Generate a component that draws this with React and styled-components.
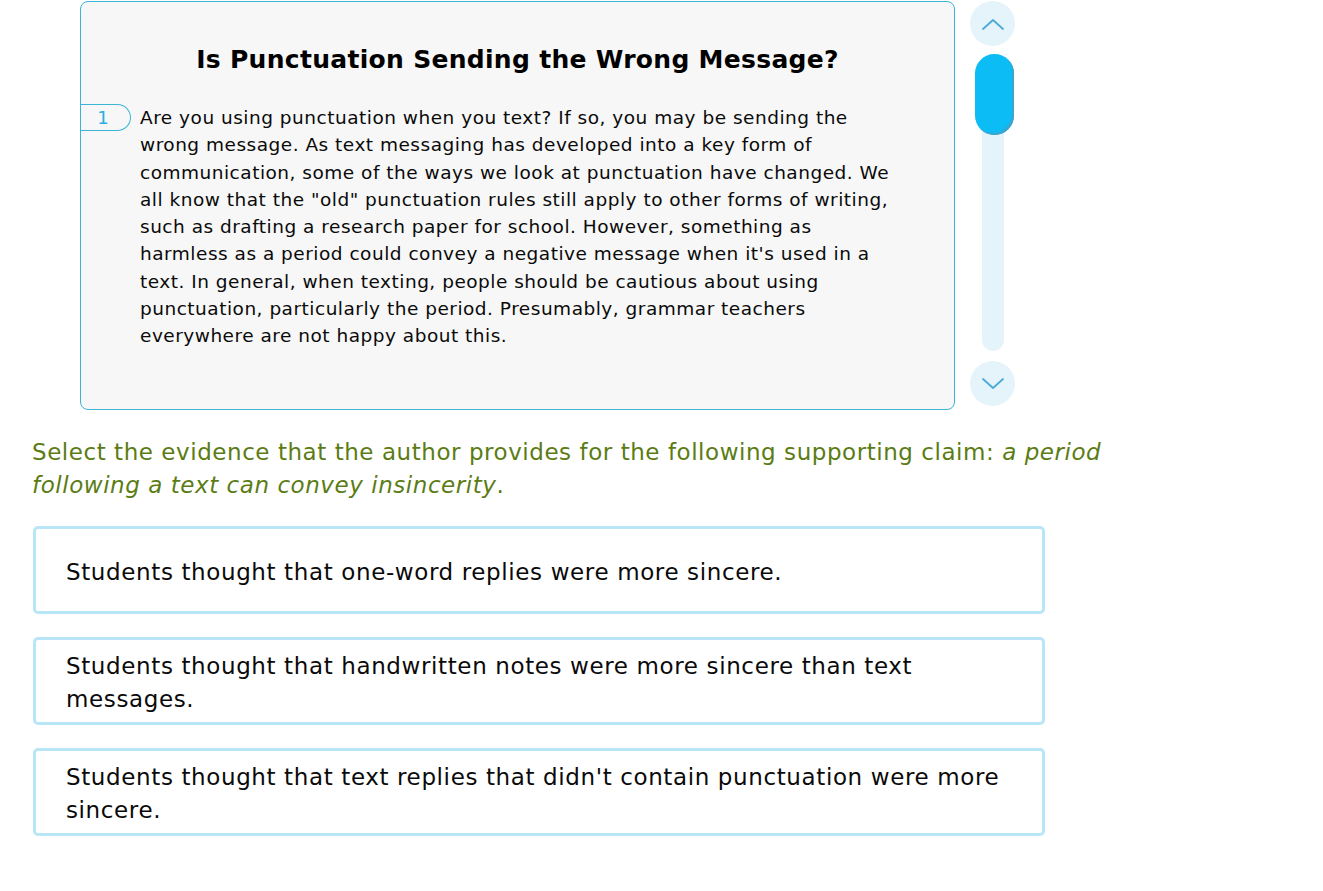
import React from "react";
import styled, { createGlobalStyle } from "styled-components";

const GlobalStyle = createGlobalStyle`
    body {
        margin: 0;
        background: #fff;
        font-family: "DejaVu Sans", Verdana, sans-serif;
        color: #000;
    }
`;

const Page = styled.div`
    width: 1323px;
    padding-top: 1px;
`;

const TopRow = styled.div`
    display: flex;
    align-items: flex-start;
    padding-left: 80px;
`;

const Passage = styled.div`
    box-sizing: border-box;
    width: 875px;
    height: 409px;
    background: #f7f7f7;
    border: 1px solid #3ab5d6;
    border-radius: 8px;
    padding-top: 40px;
`;

const Title = styled.h1`
    margin: 0 0 26px;
    text-align: center;
    font-size: 25px;
    letter-spacing: 0.3px;
    line-height: 36px;
    font-weight: bold;
    color: #000;
`;

const Paragraph = styled.div`
    display: flex;
    align-items: flex-start;
`;

const Num = styled.span`
    box-sizing: border-box;
    flex: none;
    width: 51px;
    height: 27px;
    margin: 0 9px 0 -1px;
    border: 1px solid #3ab5d6;
    border-left: none;
    border-radius: 0 14px 14px 0;
    color: #2aaee0;
    font-size: 18px;
    line-height: 25px;
    text-align: center;
    padding-right: 4px;
`;

const Body = styled.p`
    width: 762px;
    margin: 0;
    font-size: 18.5px;
    letter-spacing: 0.5px;
    line-height: 27.25px;
    color: #0a0a0a;
`;

const Scroll = styled.div`
    display: flex;
    flex-direction: column;
    align-items: center;
    width: 45px;
    margin-left: 15px;
`;

const ArrowBtn = styled.div`
    width: 45px;
    height: 45px;
    border-radius: 50%;
    background: #e5f4fa;
    display: flex;
    align-items: center;
    justify-content: center;
`;

const Track = styled.div`
    position: relative;
    width: 22px;
    height: 297px;
    margin: 8px 0 10px;
    background: #e5f4fa;
    border-radius: 11px;
`;

const Thumb = styled.div`
    position: absolute;
    top: 0;
    left: -7px;
    width: 39px;
    height: 81px;
    box-sizing: border-box;
    background: #0cbcf5;
    border-radius: 20px;
    box-shadow: inset -2px -2px 0 #3aa6d0;
`;

const Question = styled.p`
    margin: 26px 0 0;
    padding: 0 200px 0 32px;
    font-size: 23px;
    letter-spacing: 0.55px;
    line-height: 33px;
    color: #5b7c14;

    em {
        font-style: italic;
    }
`;

const Options = styled.div`
    display: flex;
    flex-direction: column;
    gap: 23px;
    margin: 24px 0 0 33px;
    width: 1012px;
`;

const Option = styled.div`
    box-sizing: border-box;
    min-height: 88px;
    display: flex;
    align-items: center;
    padding: 10px 32px 6px 30px;
    border: 3px solid #b8e6f6;
    border-radius: 5px;
    background: #fff;
    font-size: 23px;
    letter-spacing: 0.62px;
    line-height: 33px;
    color: #0a0a0a;
`;

const Chevron = ({ up }) => (
    <svg width="24" height="14" viewBox="0 0 24 14">
        <path
            d={up ? "M2 12 L12 3 L22 12" : "M2 2 L12 11 L22 2"}
            fill="none"
            stroke="#4aaad8"
            strokeWidth="1.8"
            strokeLinecap="round"
            strokeLinejoin="round"
        />
    </svg>
);

const options = [
    "Students thought that one-word replies were more sincere.",
    "Students thought that handwritten notes were more sincere than text messages.",
    "Students thought that text replies that didn't contain punctuation were more sincere.",
];

export default function App() {
    return (
        <>
            <GlobalStyle />
            <Page>
                <TopRow>
                    <Passage>
                        <Title>Is Punctuation Sending the Wrong Message?</Title>
                        <Paragraph>
                            <Num>1</Num>
                            <Body>
                                Are you using punctuation when you text? If so, you may be sending the
                                wrong message. As text messaging has developed into a key form of
                                communication, some of the ways we look at punctuation have changed. We
                                all know that the "old" punctuation rules still apply to other forms of writing,
                                such as drafting a research paper for school. However, something as
                                harmless as a period could convey a negative message when it's used in a
                                text. In general, when texting, people should be cautious about using
                                punctuation, particularly the period. Presumably, grammar teachers
                                everywhere are not happy about this.
                            </Body>
                        </Paragraph>
                    </Passage>
                    <Scroll>
                        <ArrowBtn><Chevron up /></ArrowBtn>
                        <Track><Thumb /></Track>
                        <ArrowBtn><Chevron /></ArrowBtn>
                    </Scroll>
                </TopRow>
                <Question>
                    Select the evidence that the author provides for the following supporting claim: <em>a period following a text can convey insincerity</em>.
                </Question>
                <Options>
                    {options.map(text => (
                        <Option key={text}>{text}</Option>
                    ))}
                </Options>
            </Page>
        </>
    );
}
